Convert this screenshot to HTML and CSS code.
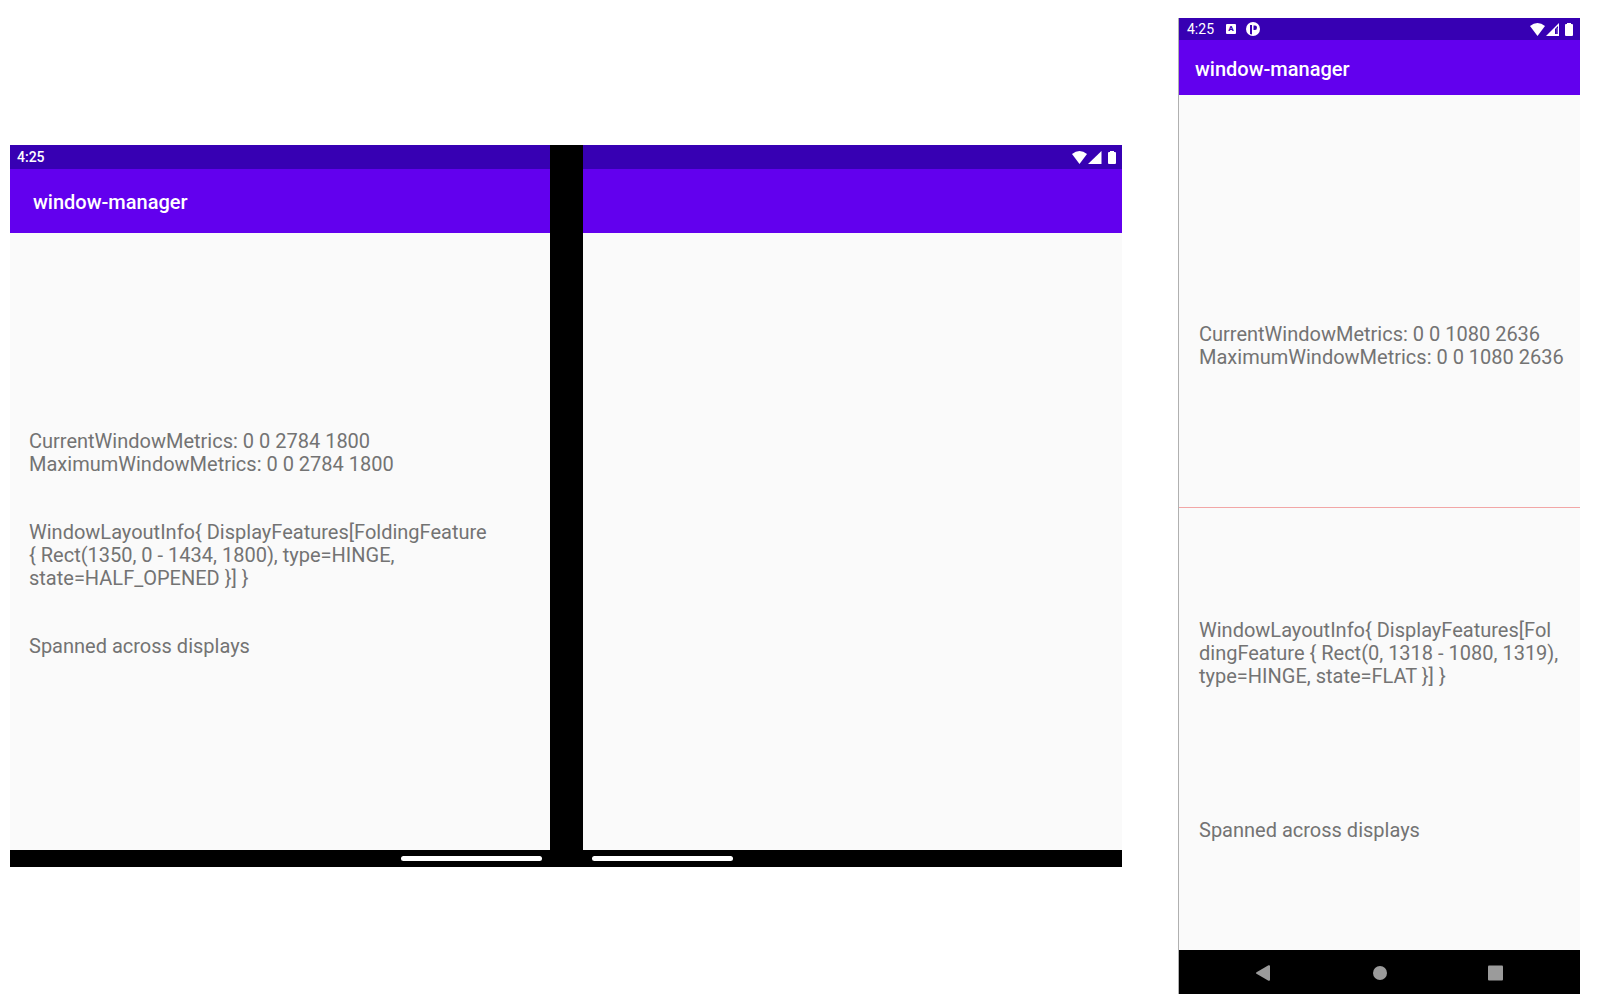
FILE: index.html
```
<!DOCTYPE html>
<html lang="en">
<head>
  <meta charset="UTF-8" />
  <meta name="viewport" content="width=device-width, initial-scale=1" />
  <title>window-manager</title>
  <link rel="stylesheet" href="styles.css">
</head>
<body>
  <main class="devices">
    <section class="tablet" aria-label="Dual screen device">
      <div class="pane">
        <div class="status-bar">
          <span class="clock">4:25</span>
        </div>
        <header class="app-bar">
          <h1>window-manager</h1>
        </header>
        <div class="content">
          <p>CurrentWindowMetrics: 0 0 2784 1800<br>MaximumWindowMetrics: 0 0 2784 1800</p>
          <p>WindowLayoutInfo{ DisplayFeatures[FoldingFeature<br>{ Rect(1350, 0 - 1434, 1800), type=HINGE,<br>state=HALF_OPENED }] }</p>
          <p>Spanned across displays</p>
        </div>
        <div class="gesture-bar gesture-left">
          <button class="pill" aria-label="Home"></button>
        </div>
      </div>
      <div class="hinge"></div>
      <div class="pane">
        <div class="status-bar">
          <div class="status-icons">
            <svg width="15" height="13" viewBox="0 0 15 13"><path d="M0 3Q7.500-3 15 3L7.500 13Z" /></svg>
            <svg width="14" height="13" viewBox="0 0 14 13"><path d="M0 13L13.500 0V13Z" /></svg>
            <svg class="battery" width="8" height="13" viewBox="0 0 8 13"><path d="M2 1V0H6V1H7Q8 1 8 2V12Q8 13 7 13H1Q0 13 0 12V2Q0 1 1 1Z" /></svg>
          </div>
        </div>
        <div class="app-bar"></div>
        <div class="content"></div>
        <div class="gesture-bar">
          <button class="pill" aria-label="Home"></button>
        </div>
      </div>
    </section>

    <section class="phone" aria-label="Foldable device">
      <div class="status-bar">
        <span class="clock">4:25</span>
        <span class="keyboard-icon">A</span>
        <svg class="notice-icon" width="14" height="14" viewBox="0 0 14 14">
          <circle cx="7" cy="7" r="7" />
          <path class="cut" d="M4 3H6V12.500L4 12ZM7.500 3.500H9Q11 3.500 11 5.500Q11 8 9 8H7.500Z" />
        </svg>
        <div class="status-icons">
          <svg width="15" height="13" viewBox="0 0 15 13"><path d="M0 3Q7.500-3 15 3L7.500 13Z" /></svg>
          <svg width="13" height="13" viewBox="0 0 13 13"><path d="M0 13L13 0V13Z" /><path class="cut" d="M9 6L12 3V11H9Z" /><path d="M10.500 5H12V11H10.500Z" opacity="0.3" /></svg>
          <svg class="battery" width="8" height="13" viewBox="0 0 8 13"><path d="M2 1V0H6V1H7Q8 1 8 2V12Q8 13 7 13H1Q0 13 0 12V2Q0 1 1 1Z" /></svg>
        </div>
      </div>
      <header class="app-bar">
        <h1>window-manager</h1>
      </header>
      <div class="half upper">
        <p>CurrentWindowMetrics: 0 0 1080 2636<br>MaximumWindowMetrics: 0 0 1080 2636</p>
      </div>
      <div class="half lower">
        <p>WindowLayoutInfo{ DisplayFeatures[Fol<br>dingFeature { Rect(0, 1318 - 1080, 1319),<br>type=HINGE, state=FLAT }] }</p>
        <p>Spanned across displays</p>
      </div>
      <nav class="nav-bar">
        <button aria-label="Back"><svg width="16" height="16" viewBox="0 0 16 16"><path d="M.5 7.200L12.500 .3Q14 0 14 1V15Q14 16 12.500 15.700L.5 8.800Q-.5 8 .5 7.200Z" /></svg></button>
        <button aria-label="Home"><svg width="16" height="16" viewBox="0 0 16 16"><circle cx="8" cy="8" r="7" /></svg></button>
        <button aria-label="Recent apps"><svg width="16" height="16" viewBox="0 0 16 16"><rect x="0" y="0.500" width="15" height="15" rx="1" /></svg></button>
      </nav>
    </section>
  </main>
</body>
</html>
```
FILE: styles.css
```
* {
  box-sizing: border-box;
}
body {
  font-family: Roboto, Arial, sans-serif;
  background: #fff;
  margin: 0;
  color: #737373;
}
h1, p {
  margin: 0;
}
p {
  font-size: 20px;
  line-height: 23px;
}
svg {
  display: block;
  fill: #fff;
}
button {
  border: 0;
  padding: 0;
  background: none;
  cursor: pointer;
}
.devices {
  display: grid;
  grid-template-columns: 1112fr 402fr;
  gap: 56px;
  align-items: center;
  min-height: 100vh;
  padding: 18px 20px 12px 10px;
}

/* Shared bars */
.status-bar {
  display: flex;
  align-items: center;
  height: 24px;
  padding: 0 6px 0 7px;
  background: #3700b3;
  color: #fff;
}
.clock {
  font-size: 14px;
}
.status-icons {
  display: flex;
  gap: 1px;
  margin-left: auto;
}
.battery {
  margin-left: 5px;
}
.cut {
  fill: #3700b3;
}
.app-bar {
  display: flex;
  align-items: center;
  background: #6200ee;
  color: #fff;
}
.app-bar h1 {
  font-size: 20px;
  font-weight: 500;
}

/* Dual screen */
.tablet {
  display: grid;
  grid-template-columns: 540fr 33fr 539fr;
  min-height: 722px;
}
.pane {
  display: flex;
  flex-direction: column;
}
.hinge {
  background: #000;
}
.tablet .clock {
  font-weight: 500;
}
.tablet .app-bar {
  height: 64px;
  padding: 2px 23px 0;
}
.content {
  flex: 1;
  display: flex;
  flex-direction: column;
  justify-content: center;
  gap: 45px;
  padding: 4px 19px 0;
  background: #fafafa;
}
.gesture-bar {
  display: flex;
  align-items: center;
  height: 17px;
  padding: 0 8px 0 9px;
  background: #000;
}
.gesture-left {
  justify-content: flex-end;
}
.pill {
  width: 141px;
  height: 5px;
  border-radius: 3px;
  background: #fff;
}

/* Foldable phone */
.phone {
  display: flex;
  flex-direction: column;
  min-height: 976px;
  border-left: 1px solid #b0b0b0;
}
.phone .status-bar {
  height: 22px;
  padding: 0 7px 0 8px;
}
.keyboard-icon {
  width: 10px;
  height: 10px;
  margin-left: 12px;
  border-radius: 1px;
  background: #fff;
  color: #3700b3;
  font-size: 8px;
  font-weight: 900;
  line-height: 10px;
  text-align: center;
}
.notice-icon {
  margin-left: 10px;
}
.phone .app-bar {
  height: 55px;
  padding: 2px 16px 0;
}
.half {
  padding: 0 10px 0 20px;
  background: #fafafa;
}
.upper {
  height: 413px;
  padding-top: 228px;
  border-bottom: 1px solid #f2a6a6;
}
.lower {
  flex: 1;
  display: flex;
  flex-direction: column;
  gap: 131px;
  padding-top: 111px;
}
.nav-bar {
  display: flex;
  justify-content: center;
  height: 44px;
  padding-top: 1px;
  background: #000;
}
.nav-bar button {
  display: flex;
  align-items: center;
  justify-content: center;
  width: 116px;
}
.nav-bar svg {
  fill: #9b9b9b;
}
```
